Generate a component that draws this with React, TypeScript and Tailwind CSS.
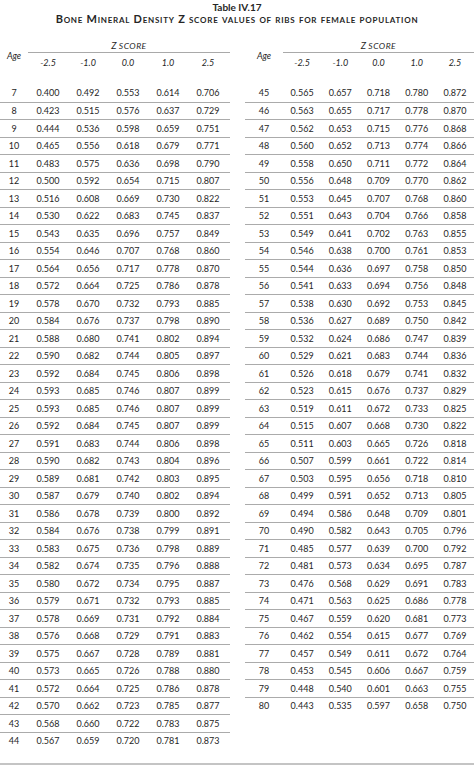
import React from "react";

const leftRaw = `7 0.400 0.492 0.553 0.614 0.706
8 0.423 0.515 0.576 0.637 0.729
9 0.444 0.536 0.598 0.659 0.751
10 0.465 0.556 0.618 0.679 0.771
11 0.483 0.575 0.636 0.698 0.790
12 0.500 0.592 0.654 0.715 0.807
13 0.516 0.608 0.669 0.730 0.822
14 0.530 0.622 0.683 0.745 0.837
15 0.543 0.635 0.696 0.757 0.849
16 0.554 0.646 0.707 0.768 0.860
17 0.564 0.656 0.717 0.778 0.870
18 0.572 0.664 0.725 0.786 0.878
19 0.578 0.670 0.732 0.793 0.885
20 0.584 0.676 0.737 0.798 0.890
21 0.588 0.680 0.741 0.802 0.894
22 0.590 0.682 0.744 0.805 0.897
23 0.592 0.684 0.745 0.806 0.898
24 0.593 0.685 0.746 0.807 0.899
25 0.593 0.685 0.746 0.807 0.899
26 0.592 0.684 0.745 0.807 0.899
27 0.591 0.683 0.744 0.806 0.898
28 0.590 0.682 0.743 0.804 0.896
29 0.589 0.681 0.742 0.803 0.895
30 0.587 0.679 0.740 0.802 0.894
31 0.586 0.678 0.739 0.800 0.892
32 0.584 0.676 0.738 0.799 0.891
33 0.583 0.675 0.736 0.798 0.889
34 0.582 0.674 0.735 0.796 0.888
35 0.580 0.672 0.734 0.795 0.887
36 0.579 0.671 0.732 0.793 0.885
37 0.578 0.669 0.731 0.792 0.884
38 0.576 0.668 0.729 0.791 0.883
39 0.575 0.667 0.728 0.789 0.881
40 0.573 0.665 0.726 0.788 0.880
41 0.572 0.664 0.725 0.786 0.878
42 0.570 0.662 0.723 0.785 0.877
43 0.568 0.660 0.722 0.783 0.875
44 0.567 0.659 0.720 0.781 0.873`;

const rightRaw = `45 0.565 0.657 0.718 0.780 0.872
46 0.563 0.655 0.717 0.778 0.870
47 0.562 0.653 0.715 0.776 0.868
48 0.560 0.652 0.713 0.774 0.866
49 0.558 0.650 0.711 0.772 0.864
50 0.556 0.648 0.709 0.770 0.862
51 0.553 0.645 0.707 0.768 0.860
52 0.551 0.643 0.704 0.766 0.858
53 0.549 0.641 0.702 0.763 0.855
54 0.546 0.638 0.700 0.761 0.853
55 0.544 0.636 0.697 0.758 0.850
56 0.541 0.633 0.694 0.756 0.848
57 0.538 0.630 0.692 0.753 0.845
58 0.536 0.627 0.689 0.750 0.842
59 0.532 0.624 0.686 0.747 0.839
60 0.529 0.621 0.683 0.744 0.836
61 0.526 0.618 0.679 0.741 0.832
62 0.523 0.615 0.676 0.737 0.829
63 0.519 0.611 0.672 0.733 0.825
64 0.515 0.607 0.668 0.730 0.822
65 0.511 0.603 0.665 0.726 0.818
66 0.507 0.599 0.661 0.722 0.814
67 0.503 0.595 0.656 0.718 0.810
68 0.499 0.591 0.652 0.713 0.805
69 0.494 0.586 0.648 0.709 0.801
70 0.490 0.582 0.643 0.705 0.796
71 0.485 0.577 0.639 0.700 0.792
72 0.481 0.573 0.634 0.695 0.787
73 0.476 0.568 0.629 0.691 0.783
74 0.471 0.563 0.625 0.686 0.778
75 0.467 0.559 0.620 0.681 0.773
76 0.462 0.554 0.615 0.677 0.769
77 0.457 0.549 0.611 0.672 0.764
78 0.453 0.545 0.606 0.667 0.759
79 0.448 0.540 0.601 0.663 0.755
80 0.443 0.535 0.597 0.658 0.750`;

const parse = (s: string) => s.split("\n").map((l) => l.trim().split(/\s+/));

const heads = ["-2.5", "-1.0", "0.0", "1.0", "2.5"];

function Table({ rows, ageW, side }: { rows: string[][]; ageW: string; side: "l" | "r" }) {
  return (
    <div className={side === "l" ? "w-[230px] flex flex-col" : "flex-1 flex flex-col"}>
      <div className="flex h-[59px]">
        <div className={`${ageW} shrink-0 pt-[25px] text-center text-[9px] leading-[12px] italic`}>
          Age
        </div>
        <div className="flex-1 flex flex-col">
          <div className="mt-[16px] h-[12px] border-b border-[#a9a9a9] text-center text-[9.5px] leading-[10px] italic">
            Z <span className="text-[8.5px] tracking-[0.5px]">SCORE</span>
          </div>
          <div className={side === "l" ? "mt-[4px] flex pr-[2px]" : "mt-[4px] flex"}>
            {heads.map((h) => (
              <div key={h} className="flex-1 text-center text-[9px] leading-[12px] italic">
                {h}
              </div>
            ))}
          </div>
        </div>
      </div>
      {rows.map((r, i) => (
        <div
          key={r[0]}
          className={`flex h-[17.5px] items-center text-[9px] ${i > 0 ? "border-t border-[#ababab]" : ""}`}
        >
          <div className={`${ageW} shrink-0 text-center`}>{r[0]}</div>
          <div className={side === "l" ? "flex-1 flex pr-[2px]" : "flex-1 flex"}>
            {r.slice(1).map((v, j) => (
              <div key={j} className="flex-1 text-center">
                {v}
              </div>
            ))}
          </div>
        </div>
      ))}
    </div>
  );
}

export default function App() {
  const left = parse(leftRaw);
  const right = parse(rightRaw);
  return (
    <div className="w-[474px] h-[770px] bg-white text-[#262626] font-['Lato',sans-serif] overflow-hidden">
      <div className="pt-[1px] text-center font-bold">
        <div className="h-[12px] text-[10px] leading-[12px]">Table IV.17</div>
        <div className="h-[12px] text-[11px] leading-[12px] [font-variant:small-caps] tracking-[0.75px]">
          Bone Mineral Density Z score values of ribs for female population
        </div>
      </div>
      <div className="flex h-[740px] border-b-2 border-[#c4c4c4]">
        <Table rows={left} ageW="w-[28px]" side="l" />
        <div className="w-[15px] shrink-0" />
        <Table rows={right} ageW="w-[38px]" side="r" />
      </div>
    </div>
  );
}
